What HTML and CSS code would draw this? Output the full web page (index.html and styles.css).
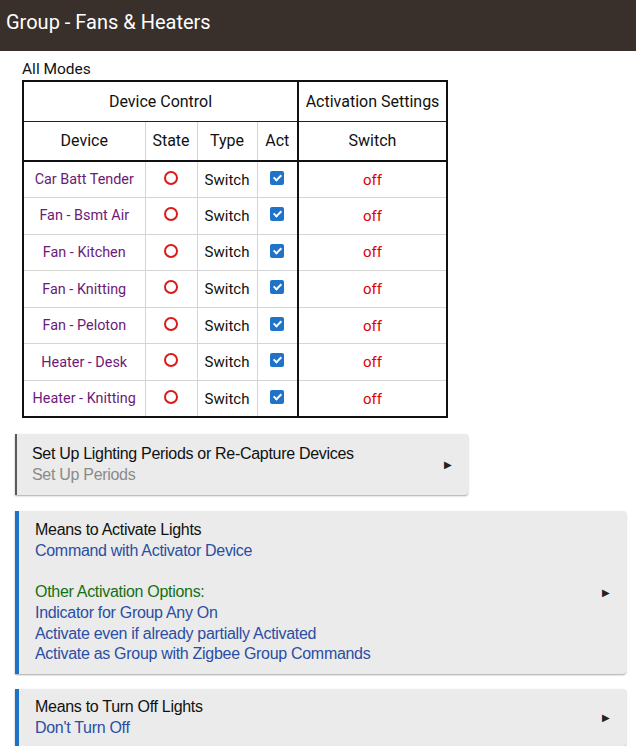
FILE: index.html
```html
<!DOCTYPE html>
<html lang="en">
<head>
<meta charset="utf-8">
<title>Group - Fans &amp; Heaters</title>
<link rel="stylesheet" href="styles.css">
</head>
<body>
<header class="topbar">Group - Fans &amp; Heaters</header>

<main class="content">
  <div class="mode-label">All Modes</div>
  <table class="devices">
    <colgroup>
      <col class="c-device"><col class="c-state"><col class="c-type"><col class="c-act"><col class="c-switch">
    </colgroup>
    <thead>
      <tr class="group-row">
        <th colspan="4" class="sep">Device Control</th>
        <th>Activation Settings</th>
      </tr>
      <tr class="head-row">
        <th>Device</th><th>State</th><th>Type</th><th class="sep">Act</th><th>Switch</th>
      </tr>
    </thead>
    <tbody>
      <tr><td class="dev">Car Batt Tender</td><td><span class="ring"></span></td><td>Switch</td><td class="sep"><span class="check"></span></td><td class="off">off</td></tr>
      <tr><td class="dev">Fan - Bsmt Air</td><td><span class="ring"></span></td><td>Switch</td><td class="sep"><span class="check"></span></td><td class="off">off</td></tr>
      <tr><td class="dev">Fan - Kitchen</td><td><span class="ring"></span></td><td>Switch</td><td class="sep"><span class="check"></span></td><td class="off">off</td></tr>
      <tr><td class="dev">Fan - Knitting</td><td><span class="ring"></span></td><td>Switch</td><td class="sep"><span class="check"></span></td><td class="off">off</td></tr>
      <tr><td class="dev">Fan - Peloton</td><td><span class="ring"></span></td><td>Switch</td><td class="sep"><span class="check"></span></td><td class="off">off</td></tr>
      <tr><td class="dev">Heater - Desk</td><td><span class="ring"></span></td><td>Switch</td><td class="sep"><span class="check"></span></td><td class="off">off</td></tr>
      <tr><td class="dev">Heater - Knitting</td><td><span class="ring"></span></td><td>Switch</td><td class="sep"><span class="check"></span></td><td class="off">off</td></tr>
    </tbody>
  </table>

  <a class="card card-grey card-narrow">
    <div class="card-body">
      <div class="line title">Set Up Lighting Periods or Re-Capture Devices</div>
      <div class="line muted">Set Up Periods</div>
    </div>
    <span class="arrow">&#9654;</span>
  </a>

  <a class="card card-blue card-wide card-tall">
    <div class="card-body">
      <div class="line title">Means to Activate Lights</div>
      <div class="line link">Command with Activator Device</div>
      <div class="line">&nbsp;</div>
      <div class="line green">Other Activation Options:</div>
      <div class="line link">Indicator for Group Any On</div>
      <div class="line link">Activate even if already partially Activated</div>
      <div class="line link">Activate as Group with Zigbee Group Commands</div>
    </div>
    <span class="arrow">&#9654;</span>
  </a>

  <a class="card card-blue card-wide">
    <div class="card-body">
      <div class="line title">Means to Turn Off Lights</div>
      <div class="line link">Don't Turn Off</div>
    </div>
    <span class="arrow">&#9654;</span>
  </a>
</main>
</body>
</html>
```

FILE: styles.css
```css
* { box-sizing: border-box; }

html, body {
  margin: 0;
  padding: 0;
  background: #ffffff;
}

body {
  font-family: Roboto, "Liberation Sans", sans-serif;
  color: #111;
}

.topbar {
  height: 51px;
  background: #39302c;
  color: #ffffff;
  font-size: 20px;
  line-height: 44px;
  padding-left: 6px;
}

.content {
  display: flex;
  flex-direction: column;
  align-items: flex-start;
}

.mode-label {
  margin: 8px 0 0 22px;
  font-size: 15.5px;
  line-height: 21px;
  height: 21px;
}

/* Device table */
.devices {
  margin-left: 22px;
  border-collapse: collapse;
  border: 2px solid #111;
  table-layout: fixed;
  width: 424px;
  font-size: 15px;
}

.c-device { width: 122px; }
.c-state { width: 52px; }
.c-type { width: 60px; }
.c-act { width: 41px; }
.c-switch { width: 149px; }

.devices th,
.devices td {
  text-align: center;
  padding: 0;
  border: 1px solid #d4d4d4;
  font-weight: 400;
}

.devices th {
  color: #111;
  font-size: 16px;
}

.group-row th {
  height: 40px;
  border-bottom: 1px solid #222;
}

.head-row th {
  height: 40px;
  border-bottom: 2px solid #111;
}

.devices td {
  height: 36.6px;
}

.devices .sep {
  border-right: 2px solid #111;
}

.devices .dev {
  color: #6c1a78;
  font-size: 14.4px;
}

.off {
  color: #e00000;
  font-weight: 500;
}

.ring {
  display: inline-block;
  width: 14px;
  height: 14px;
  border: 2px solid #d81c1c;
  border-radius: 50%;
  vertical-align: middle;
  position: relative;
  top: -3px;
}

.check {
  display: inline-block;
  width: 14px;
  height: 14px;
  background: #1f73c8;
  border-radius: 2px;
  vertical-align: middle;
  position: relative;
  top: -3px;
}

.check::after {
  content: "";
  position: absolute;
  left: 4.5px;
  top: 2px;
  width: 3px;
  height: 6px;
  border-right: 2px solid #fff;
  border-bottom: 2px solid #fff;
  transform: rotate(45deg);
}

/* Navigation cards */
.card {
  display: flex;
  align-items: center;
  margin-left: 15px;
  background: #ebebeb;
  font-family: "Liberation Sans", Arial, sans-serif;
  font-size: 16px;
  box-shadow: 0 1px 2px rgba(0, 0, 0, 0.35);
  border-radius: 0 3px 3px 0;
  text-decoration: none;
  color: #111;
}

.card-grey {
  border-left: 2px solid #5a5a5a;
  margin-top: 16px;
  height: 61px;
  padding-left: 15px;
}

.card-blue {
  border-left: 4px solid #1d72c7;
  padding-left: 16px;
}

.card-narrow { width: 453px; }
.card-wide { width: 611px; }

.card-tall {
  margin-top: 16px;
  height: 163px;
}

.card-wide:not(.card-tall) {
  margin-top: 15px;
  height: 57px;
}

.card-body {
  flex: 1;
  letter-spacing: -0.3px;
}

.line {
  line-height: 20.7px;
}

.title { color: #111; }
.muted { color: #8a8a8a; }
.link { color: #2a4ea3; }
.green { color: #157015; }

.arrow {
  font-size: 10px;
  color: #222;
  margin-right: 16px;
}
```
